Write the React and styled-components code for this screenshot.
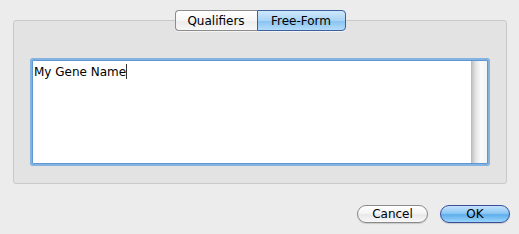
import React from "react";
import styled, { createGlobalStyle } from "styled-components";

const Global = createGlobalStyle`
  html, body {
    margin: 0;
    padding: 0;
    background: #ececec;
  }
  body {
    font-family: "DejaVu Sans", "Liberation Sans", sans-serif;
    font-size: 12px;
    color: #000;
  }
`;

const K = {
  Window: styled.div`
    width: 519px;
    height: 234px;
    background: #ececec;
    box-sizing: border-box;
    padding-top: 10px;
    display: flex;
    flex-direction: column;
  `,
  TabRow: styled.div`
    display: flex;
    justify-content: center;
    position: relative;
    z-index: 1;
    height: 21px;
    padding-left: 1px;
  `,
  Segmented: styled.div`
    display: flex;
    height: 21px;
    box-sizing: border-box;
    border-radius: 4px;
    box-shadow: 0 1px 0 rgba(255, 255, 255, 0.6);
  `,
  Tab: styled.div`
    box-sizing: border-box;
    width: ${(p) => p.w}px;
    height: 21px;
    display: flex;
    align-items: center;
    justify-content: center;
    font-size: 12px;
    border: 1px solid ${(p) => (p.active ? "#3b5f9f" : "#8c8c8c")};
    background: ${(p) =>
      p.active
        ? "linear-gradient(#cfe8fb 0%, #a9d4f6 50%, #86c2f0 51%, #b4dcfa 100%)"
        : "linear-gradient(#ffffff 0%, #f6f6f6 50%, #ececec 51%, #f7f7f7 100%)"};
    border-radius: ${(p) => (p.first ? "4px 0 0 4px" : "0 4px 4px 0")};
    ${(p) => (p.first ? "border-right: none;" : "")}
  `,
  Group: styled.div`
    margin: -11px 12px 0 13px;
    height: 164px;
    box-sizing: border-box;
    background: #e3e3e3;
    border: 1px solid #c9c9c9;
    border-radius: 3px;
    padding: 37px 16px 17px 16px;
    display: flex;
  `,
  Field: styled.div`
    flex: 1;
    display: flex;
    box-sizing: border-box;
    background: #fff;
    border: 1px solid #5e97d3;
    box-shadow: 0 0 0 2px rgba(108, 166, 223, 0.8);
    margin: 2px;
    border-radius: 1px;
  `,
  Text: styled.div`
    flex: 1;
    padding: 3px 0 0 1px;
    font-size: 12px;
    line-height: 15px;
  `,
  Caret: styled.span`
    display: inline-block;
    width: 1px;
    height: 15px;
    background: #333;
    vertical-align: -3px;
  `,
  Scroll: styled.div`
    width: 15px;
    background: linear-gradient(
      to right,
      #c4c4c4 0%,
      #e4e4e4 25%,
      #fafafa 60%,
      #f3f3f3 100%
    );
    border-left: 1px solid #bdbdbd;
  `,
  Buttons: styled.div`
    display: flex;
    justify-content: flex-end;
    gap: 12px;
    padding: 21px 9px 0 0;
  `,
  Button: styled.div`
    box-sizing: border-box;
    width: ${(p) => p.w}px;
    height: 18px;
    border-radius: 9px;
    display: flex;
    align-items: center;
    justify-content: center;
    font-size: 12px;
    border: 1px solid ${(p) => (p.primary ? "#3a4f9c" : "#8a8a8a")};
    background: ${(p) =>
      p.primary
        ? "linear-gradient(#c4e2fb 0%, #8ec8f4 45%, #5eaeec 55%, #9ad5fb 100%)"
        : "linear-gradient(#ffffff 0%, #f5f5f5 45%, #e8e8e8 55%, #f8f8f8 100%)"};
    box-shadow: 0 1px 1px rgba(0, 0, 0, 0.15);
  `,
};

const App = () => {
  return (
    <>
      <Global />
      <K.Window>
        <K.TabRow>
          <K.Segmented>
            <K.Tab first w={82}>
              Qualifiers
            </K.Tab>
            <K.Tab active w={89}>
              Free-Form
            </K.Tab>
          </K.Segmented>
        </K.TabRow>
        <K.Group>
          <K.Field>
            <K.Text>
              My Gene Name
              <K.Caret />
            </K.Text>
            <K.Scroll />
          </K.Field>
        </K.Group>
        <K.Buttons>
          <K.Button w={71}>Cancel</K.Button>
          <K.Button primary w={70}>
            OK
          </K.Button>
        </K.Buttons>
      </K.Window>
    </>
  );
};

export default App;
